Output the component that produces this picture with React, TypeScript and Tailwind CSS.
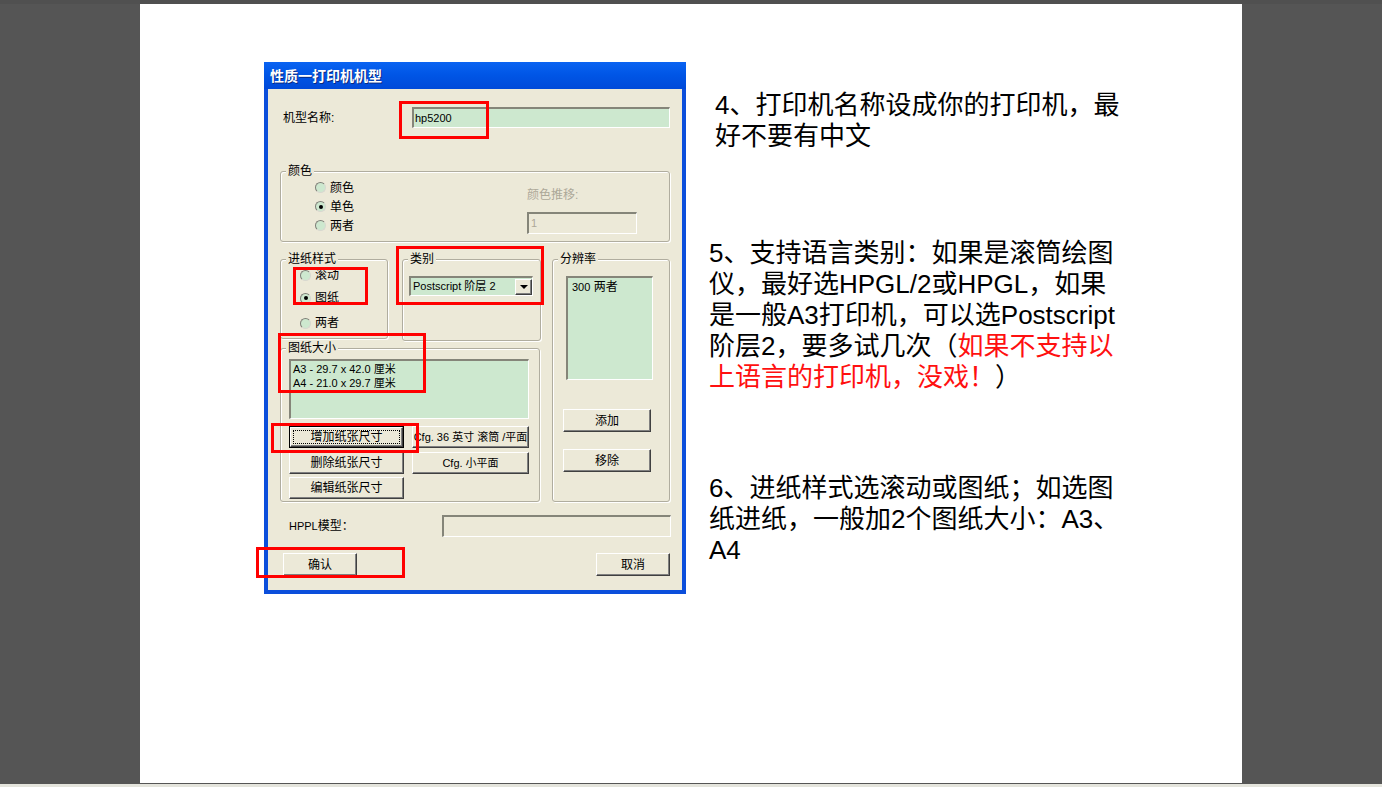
import React from "react";

const FONT = "font-['Liberation_Sans','Noto_Sans_CJK_SC',sans-serif]";

function Sunken({ className = "", children }: { className?: string; children?: React.ReactNode }) {
  return (
    <div
      className={`border-t-2 border-l-2 border-b border-r border-t-[#858579] border-l-[#858579] border-b-white border-r-white ${className}`}
    >
      {children}
    </div>
  );
}

function Btn({ className = "", children, focused = false }: { className?: string; children?: React.ReactNode; focused?: boolean }) {
  if (focused) {
    return (
      <div className={`border border-black ${className} flex`}>
        <div className="flex-1 bg-[#ECE9D8] border border-t-white border-l-white border-b-[#404040] border-r-[#404040] shadow-[inset_-1px_-1px_0_#808080] flex p-[2px]">
          <div className="flex-1 border border-dotted border-black flex items-center justify-center leading-none">{children}</div>
        </div>
      </div>
    );
  }
  return (
    <div
      className={`bg-[#ECE9D8] border border-t-white border-l-white border-b-[#404040] border-r-[#404040] shadow-[inset_-1px_-1px_0_#808080] flex items-center justify-center leading-none whitespace-nowrap ${className}`}
    >
      {children}
    </div>
  );
}

function Radio({ checked = false }: { checked?: boolean }) {
  return (
    <span className="w-[11px] h-[11px] shrink-0 rounded-full bg-[#cde8cf] border border-t-[#7f7f78] border-l-[#7f7f78] border-b-[#d8d8d0] border-r-[#d8d8d0] flex items-center justify-center">
      {checked && <span className="w-[4px] h-[4px] rounded-full bg-black" />}
    </span>
  );
}

function Group({ label, className = "", children }: { label: string; className?: string; children?: React.ReactNode }) {
  return (
    <div className={`relative shrink-0 border border-[#b0ad9f] rounded-[3px] shadow-[1px_1px_0_#fff,inset_1px_1px_0_#fff] ${className}`}>
      <span className="absolute left-[5px] -top-[8px] px-[2px] bg-[#ECE9D8] leading-[14px] whitespace-nowrap">{label}</span>
      {children}
    </div>
  );
}

function Dialog() {
  return (
    <div className={`w-[422px] h-[532px] shrink-0 flex flex-col bg-[#0b4edb] text-[12px] text-black ${FONT}`}>
      <div className="h-[27px] shrink-0 flex items-center pl-[6px] bg-linear-to-b from-[#0a63f2] via-[#0055e5] to-[#004ad9]">
        <span className="text-white font-bold text-[14px] leading-none [text-shadow:1px_1px_0_#0a2a80]">性质一打印机机型</span>
      </div>
      <div className="flex-1 flex pl-[4px]">
        <div className="w-[414px] h-[501px] bg-[#ECE9D8] pt-[1px] flex flex-col">
          {/* name row */}
          <div className="mt-[17px] flex items-center h-[21px]">
            <span className="pl-[15px] w-[144px] shrink-0">机型名称:</span>
            <Sunken className="w-[258px] h-[21px] bg-[#cde8cf] flex items-center pl-[1px] text-[11px]">hp5200</Sunken>
          </div>

          {/* colour group */}
          <Group label="颜色" className="mt-[43px] ml-[12px] w-[390px] h-[71px] flex">
            <div className="ml-[34px] w-[212px] pt-[6px] flex flex-col">
              {[
                ["颜色", false],
                ["单色", true],
                ["两者", false],
              ].map(([t, c]) => (
                <div key={t as string} className="h-[19px] flex items-center gap-[4px]">
                  <Radio checked={c as boolean} />
                  <span className="leading-none">{t as string}</span>
                </div>
              ))}
            </div>
            <div className="pt-[16px] flex flex-col">
              <span className="text-[#aca899] leading-[14px]">颜色推移:</span>
              <Sunken className="mt-[10px] w-[110px] h-[22px] flex items-center pl-[2px] text-[11px] text-[#aca899]">1</Sunken>
            </div>
          </Group>

          {/* middle row */}
          <div className="mt-[17px] ml-[12px] flex items-start">
            <div className="w-[261px] shrink-0 flex flex-col">
              <div className="flex items-start">
                <Group label="进纸样式" className="w-[108px] h-[80px]">
                  <div className="pl-[19px] pt-[6px] flex flex-col">
                    <div className="h-[18px] flex items-center gap-[4px]">
                      <Radio />
                      <span className="leading-none">滚动</span>
                    </div>
                    <div className="mt-[5px] h-[18px] flex items-center gap-[4px]">
                      <Radio checked />
                      <span className="leading-none">图纸</span>
                    </div>
                    <div className="mt-[7px] h-[18px] flex items-center gap-[4px]">
                      <Radio />
                      <span className="leading-none">两者</span>
                    </div>
                  </div>
                </Group>
                <Group label="类别" className="ml-[14px] w-[139px] h-[82px]">
                  <div className="pl-[6px] pt-[16px]">
                    <Sunken className="w-[124px] h-[20px] bg-[#cde8cf] flex items-center">
                      <span className="flex-1 pl-[2px] text-[11px] leading-none whitespace-nowrap">Postscript 阶层 2</span>
                      <Btn className="w-[17px] h-[16px] mr-[0px]">
                        <span className="w-0 h-0 border-l-[4px] border-r-[4px] border-t-[4px] border-l-transparent border-r-transparent border-t-black" />
                      </Btn>
                    </Sunken>
                  </div>
                </Group>
              </div>
              <Group label="图纸大小" className="mt-[7px] w-[260px] h-[154px]">
                <div className="pl-[8px] pt-[10px] flex flex-col">
                  <Sunken className="w-[240px] h-[60px] bg-[#cde8cf] pl-[2px] pt-[1px] text-[11px] leading-[14px]">
                    <div>A3 - 29.7 x 42.0 厘米</div>
                    <div>A4 - 21.0 x 29.7 厘米</div>
                  </Sunken>
                  <div className="mt-[7px] flex gap-[8px]">
                    <div className="flex flex-col">
                      <Btn focused className="w-[115px] h-[22px]">增加纸张尺寸</Btn>
                      <Btn className="mt-[4px] w-[115px] h-[22px]">删除纸张尺寸</Btn>
                      <Btn className="mt-[3px] w-[115px] h-[22px]">编辑纸张尺寸</Btn>
                    </div>
                    <div className="flex flex-col">
                      <Btn className="w-[117px] h-[22px] text-[11px]">Cfg. 36 英寸 滚筒 /平面</Btn>
                      <Btn className="mt-[4px] w-[117px] h-[22px] text-[11px]">Cfg. 小平面</Btn>
                    </div>
                  </div>
                </div>
              </Group>
            </div>
            <Group label="分辨率" className="ml-[11px] w-[118px] h-[243px]">
              <div className="pl-[10px] pt-[16px] flex flex-col items-start">
                <Sunken className="ml-[3px] w-[87px] h-[104px] bg-[#cde8cf] pl-[4px] pt-[2px] leading-[14px]">
                  <span className="text-[11px]">300</span> 两者
                </Sunken>
                <Btn className="mt-[29px] w-[88px] h-[23px]">添加</Btn>
                <Btn className="mt-[17px] w-[88px] h-[23px]">移除</Btn>
              </div>
            </Group>
          </div>

          {/* HPPL row */}
          <div className="mt-[13px] flex items-center h-[22px]">
            <span className="pl-[21px] w-[174px] shrink-0">
              <span className="text-[11px]">HPPL</span>模型：
            </span>
            <Sunken className="w-[229px] h-[22px]" />
          </div>

          {/* buttons */}
          <div className="mt-[16px] flex">
            <Btn className="ml-[15px] w-[74px] h-[23px]">确认</Btn>
            <Btn className="ml-[239px] w-[74px] h-[23px]">取消</Btn>
          </div>
        </div>
        <div className="w-[4px]" />
      </div>
    </div>
  );
}

function Notes() {
  const red = "text-[#ff1010]";
  return (
    <div className={`ml-[22px] flex flex-col text-[26px] leading-[31px] text-black whitespace-nowrap ${FONT}`}>
      <div className="mt-[28px] pl-[7px]">
        <div>4、打印机名称设成你的打印机，最</div>
        <div>好不要有中文</div>
      </div>
      <div className="mt-[86px] pl-[1px]">
        <div>5、支持语言类别：如果是滚筒绘图</div>
        <div>仪，最好选HPGL/2或HPGL，如果</div>
        <div>是一般A3打印机，可以选Postscript</div>
        <div>
          阶层2，要多试几次（<span className={red}>如果不支持以</span>
        </div>
        <div>
          <span className={red}>上语言的打印机，没戏！</span>）
        </div>
      </div>
      <div className="mt-[80px] pl-[1px]">
        <div>6、进纸样式选滚动或图纸；如选图</div>
        <div>纸进纸，一般加2个图纸大小：A3、</div>
        <div>A4</div>
      </div>
    </div>
  );
}

function RedBox({ className }: { className: string }) {
  return <div className={`absolute border-[3px] border-[#ff0000] pointer-events-none ${className}`} />;
}

export default function App() {
  return (
    <div className="w-[1382px] h-[787px] bg-[#555555] overflow-hidden flex flex-col">
      <div className="h-[4px] shrink-0 bg-[#505050]" />
      <div className="ml-[140px] w-[1102px] h-[779px] shrink-0 bg-white relative flex items-start pt-[58px] pl-[124px]">
        <Dialog />
        <Notes />
        <RedBox className="left-[259px] top-[97px] w-[90px] h-[38px]" />
        <RedBox className="left-[256px] top-[242px] w-[148px] h-[59px]" />
        <RedBox className="left-[153px] top-[263px] w-[75px] h-[38px]" />
        <RedBox className="left-[138px] top-[329px] w-[148px] h-[60px]" />
        <RedBox className="left-[131px] top-[419px] w-[148px] h-[30px]" />
        <RedBox className="left-[116px] top-[543px] w-[149px] h-[31px]" />
      </div>
      <div className="h-[1px] shrink-0" />
      <div className="h-[3px] shrink-0 bg-[#e4e4dc]" />
    </div>
  );
}
